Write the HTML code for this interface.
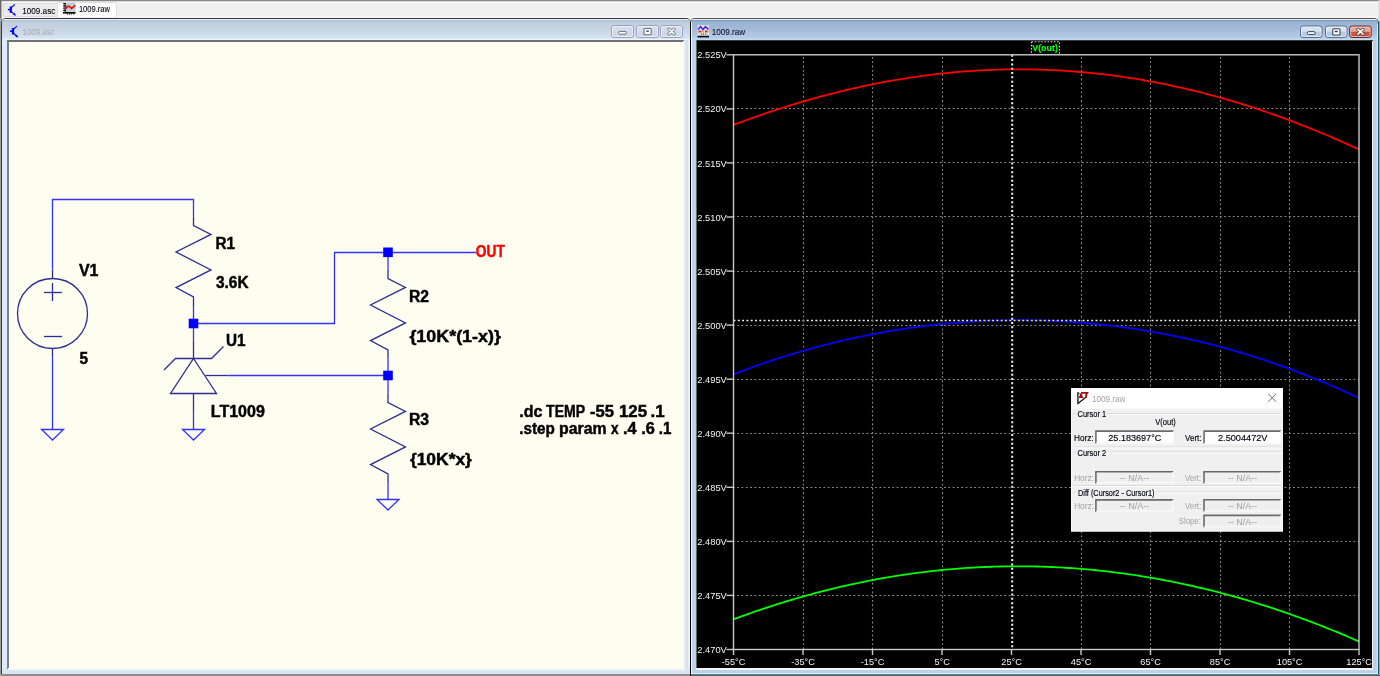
<!DOCTYPE html>
<html><head><meta charset="utf-8"><style>
html,body{margin:0;padding:0;width:1380px;height:676px;overflow:hidden;background:#f0f0f0;}
svg{position:absolute;left:0;top:0;}
</style></head><body>
<svg width="1380" height="676" viewBox="0 0 1380 676">
<defs>
<linearGradient id="tb" x1="0" y1="0" x2="0" y2="1"><stop offset="0" stop-color="#e0f0ff"/><stop offset="0.045" stop-color="#e0f0ff"/><stop offset="0.05" stop-color="#b0c0d0"/><stop offset="0.1" stop-color="#b6c6d6"/><stop offset="0.15" stop-color="#c0cedd"/><stop offset="0.45" stop-color="#c6d4e2"/><stop offset="0.92" stop-color="#d6e4f2"/><stop offset="0.95" stop-color="#e6f4fe"/><stop offset="1" stop-color="#e6f4fe"/></linearGradient>
<linearGradient id="tb2" x1="0" y1="0" x2="0" y2="1"><stop offset="0" stop-color="#e0f0ff"/><stop offset="0.045" stop-color="#e0f0ff"/><stop offset="0.05" stop-color="#7898c0"/><stop offset="0.1" stop-color="#88a6cc"/><stop offset="0.15" stop-color="#9ab4d4"/><stop offset="0.45" stop-color="#a2bad8"/><stop offset="0.92" stop-color="#b6cee8"/><stop offset="0.95" stop-color="#c0daf5"/><stop offset="1" stop-color="#c0daf5"/></linearGradient>
</defs>
<rect x="0" y="0" width="1380" height="676" fill="#f0f0f0"/>
<rect x="0" y="0" width="1380" height="1.5" fill="#858585"/>
<rect x="0" y="1.5" width="1380" height="1.5" fill="#fbfbfb"/>
<rect x="0" y="16.5" width="1380" height="1.5" fill="#f8f8f8"/>
<rect x="1378.5" y="0" width="1.5" height="20" fill="#d8d8d8"/>
<rect x="0" y="0" width="1.5" height="676" fill="#6a6a6a"/>
<!-- tabs -->
<rect x="3.5" y="3.5" width="54" height="13" fill="#ebebeb" stroke="#dcdcdc"/>
<rect x="57.5" y="2.5" width="59" height="15.5" fill="#ffffff" stroke="#e0e0e0"/>
<text x="22.2" y="13.9" font-size="9.6" font-family="Liberation Sans, sans-serif" fill="#000010" text-anchor="start" textLength="33.14" lengthAdjust="spacingAndGlyphs" stroke="#000010" stroke-width="0.1">1009.asc</text>
<text x="78.9" y="12.3" font-size="9.6" font-family="Liberation Sans, sans-serif" fill="#000010" text-anchor="start" textLength="31.05" lengthAdjust="spacingAndGlyphs" stroke="#000010" stroke-width="0.1">1009.raw</text>
<!-- left window -->
<g shape-rendering="crispEdges">
<rect x="0" y="18" width="1" height="658" fill="#a0a0a0"/>
</g>
<path d="M1.5,676 L1.5,23 Q1.5,18.5 6,18.5 L686,18.5 Q690.5,18.5 690.5,23 L690.5,676" fill="#d4e2f0" stroke="#383838" stroke-width="1"/>
<rect x="2" y="19" width="688" height="21" fill="url(#tb)" rx="3"/>
<g shape-rendering="crispEdges">
<rect x="2" y="40" width="5" height="634" fill="#dcebf8"/>
<rect x="684" y="40" width="6" height="634" fill="#d6e3f1"/>
<rect x="688" y="40" width="2" height="634" fill="#e4f0fb"/>
<rect x="2" y="668" width="688" height="6" fill="#d8e6f3"/>
<rect x="7" y="40" width="677" height="629" fill="#fefef0"/>
<rect x="9" y="42" width="674" height="1" fill="#ffffff"/>
<rect x="9" y="42" width="1" height="626" fill="#ffffff"/>
<rect x="7" y="40" width="2" height="629" fill="#7e7e7e"/>
<rect x="7" y="40" width="677" height="2" fill="#707070"/>
<rect x="683" y="41" width="2" height="628" fill="#f4f4f8"/>
<rect x="8" y="668" width="677" height="2" fill="#f8f8fa"/>
<rect x="1" y="674" width="690" height="2" fill="#8c8c8c"/>
</g>
<text x="22.5" y="35.3" font-size="9.6" font-family="Liberation Sans, sans-serif" fill="#a8a8a8" text-anchor="start" textLength="32.09" lengthAdjust="spacingAndGlyphs">1009.asc</text>
<!-- right window -->
<path d="M690.5,676 L690.5,23 Q690.5,18.5 695,18.5 L1374,18.5 Q1378.5,18.5 1378.5,23 L1378.5,676" fill="#b8d0e8" stroke="#5a5048" stroke-width="1"/>
<rect x="691" y="19" width="687" height="21" fill="url(#tb2)" rx="3"/>
<g shape-rendering="crispEdges">
<rect x="690" y="22" width="1" height="654" fill="#000"/>
<rect x="691" y="22" width="1" height="652" fill="#f4faff"/>
<rect x="692" y="40" width="5" height="634" fill="#bcd4ec"/>
<rect x="1372" y="40" width="6" height="634" fill="#b8d0e8"/>
<rect x="1377" y="24" width="1" height="650" fill="#c8f4ff"/>
<rect x="1378" y="22" width="1" height="654" fill="#0a5868"/>
<rect x="1379" y="21" width="1" height="655" fill="#c09890"/>
<rect x="692" y="668" width="685" height="5" fill="#bcd2ea"/>
<rect x="692" y="673" width="686" height="1" fill="#e0e4fc"/>
<rect x="691" y="674" width="688" height="1" fill="#18a0b4"/>
<rect x="691" y="675" width="689" height="1" fill="#7a5040"/>
<rect x="696" y="40" width="677" height="630" fill="#f4f4f4"/>
<rect x="696" y="40" width="677" height="1" fill="#403830"/>
<rect x="696" y="40" width="1" height="628" fill="#6a6a6a"/>
<rect x="697" y="41" width="675" height="627" fill="#000"/>
</g>
<text x="711.7" y="35.4" font-size="9.6" font-family="Liberation Sans, sans-serif" fill="#101028" text-anchor="start" textLength="33.53" lengthAdjust="spacingAndGlyphs" stroke="#101028" stroke-width="0.1">1009.raw</text>
<polyline points="52.5,269.5 52.5,199.5 193.5,199.5 193.5,216.5" fill="none" stroke="#3232ff" stroke-width="1.3" stroke-linejoin="miter"/>
<line x1="52.5" y1="357.5" x2="52.5" y2="429.5" stroke="#3232ff" stroke-width="1.3"/>
<line x1="193.5" y1="304.5" x2="193.5" y2="340.5" stroke="#3232ff" stroke-width="1.3"/>
<polyline points="193.5,323.5 334.5,323.5 334.5,252.5 476,252.5" fill="none" stroke="#3232ff" stroke-width="1.3" stroke-linejoin="miter"/>
<line x1="388" y1="252.5" x2="388" y2="269.5" stroke="#3232ff" stroke-width="1.3"/>
<line x1="388" y1="358" x2="388" y2="393.5" stroke="#3232ff" stroke-width="1.3"/>
<line x1="228.5" y1="375.5" x2="388" y2="375.5" stroke="#3232ff" stroke-width="1.3"/>
<line x1="193.5" y1="411" x2="193.5" y2="429.5" stroke="#3232ff" stroke-width="1.3"/>
<line x1="388" y1="482" x2="388" y2="499.5" stroke="#3232ff" stroke-width="1.3"/>
<rect x="188.7" y="318.7" width="9.6" height="9.6" fill="#0000ff"/>
<rect x="383.2" y="247.5" width="9.6" height="9.6" fill="#0000ff"/>
<rect x="383.2" y="370.7" width="9.6" height="9.6" fill="#0000ff"/>
<polygon points="41.5,429.5 63.5,429.5 52.5,440.0" fill="none" stroke="#3232ff" stroke-width="1.3"/>
<polygon points="182.5,429.5 204.5,429.5 193.5,440.0" fill="none" stroke="#3232ff" stroke-width="1.3"/>
<polygon points="377,499.5 399,499.5 388,510.0" fill="none" stroke="#3232ff" stroke-width="1.3"/>
<line x1="52.5" y1="269.5" x2="52.5" y2="278.5" stroke="#2c2c96" stroke-width="1.3"/>
<line x1="52.5" y1="348.5" x2="52.5" y2="357.5" stroke="#2c2c96" stroke-width="1.3"/>
<circle cx="52.5" cy="313.5" r="35" fill="none" stroke="#2c2c96" stroke-width="1.3"/>
<line x1="44" y1="292.5" x2="62" y2="292.5" stroke="#2c2c96" stroke-width="1.3"/>
<line x1="52.5" y1="283" x2="52.5" y2="301" stroke="#2c2c96" stroke-width="1.3"/>
<line x1="44" y1="336.5" x2="62" y2="336.5" stroke="#2c2c96" stroke-width="1.3"/>
<polyline points="193.5,216.5 193.5,225.5 211.0,234.4 176.0,252.0 211.0,269.9 176.0,287.6 193.5,297.0 193.5,305.0" fill="none" stroke="#2c2c96" stroke-width="1.3" stroke-linejoin="miter"/>
<polyline points="388,269.5 388,278.5 405.5,287.4 370.5,305.0 405.5,322.9 370.5,340.6 388,350.0 388,358.0" fill="none" stroke="#2c2c96" stroke-width="1.3" stroke-linejoin="miter"/>
<polyline points="388,393.5 388,402.5 405.5,411.4 370.5,429.0 405.5,446.9 370.5,464.6 388,474.0 388,482.0" fill="none" stroke="#2c2c96" stroke-width="1.3" stroke-linejoin="miter"/>
<line x1="193.5" y1="340.5" x2="193.5" y2="358.5" stroke="#2c2c96" stroke-width="1.3"/>
<polyline points="164,370 175.5,358.5 211.5,358.5 223.5,346.5" fill="none" stroke="#2c2c96" stroke-width="1.3" stroke-linejoin="miter"/>
<polygon points="193.5,358.5 216.5,393.5 170.5,393.5" fill="none" stroke="#2c2c96" stroke-width="1.3"/>
<line x1="205.5" y1="375.5" x2="228.5" y2="375.5" stroke="#2c2c96" stroke-width="1.3"/>
<line x1="193.5" y1="393.5" x2="193.5" y2="411" stroke="#2c2c96" stroke-width="1.3"/>
<text x="78.9" y="275.6" font-size="16" font-family="Liberation Sans, sans-serif" font-weight="bold" fill="#000" text-anchor="start" textLength="19.51" lengthAdjust="spacingAndGlyphs" stroke="#000" stroke-width="0.45">V1</text>
<text x="79.5" y="364.0" font-size="16" font-family="Liberation Sans, sans-serif" font-weight="bold" fill="#000" text-anchor="start" textLength="8.51" lengthAdjust="spacingAndGlyphs" stroke="#000" stroke-width="0.45">5</text>
<text x="215.4" y="249.0" font-size="16" font-family="Liberation Sans, sans-serif" font-weight="bold" fill="#000" text-anchor="start" textLength="19.56" lengthAdjust="spacingAndGlyphs" stroke="#000" stroke-width="0.45">R1</text>
<text x="216.0" y="288.4" font-size="16" font-family="Liberation Sans, sans-serif" font-weight="bold" fill="#000" text-anchor="start" textLength="32.51" lengthAdjust="spacingAndGlyphs" stroke="#000" stroke-width="0.45">3.6K</text>
<text x="225.9" y="345.8" font-size="16" font-family="Liberation Sans, sans-serif" font-weight="bold" fill="#000" text-anchor="start" textLength="19.53" lengthAdjust="spacingAndGlyphs" stroke="#000" stroke-width="0.45">U1</text>
<text x="210.8" y="416.5" font-size="16" font-family="Liberation Sans, sans-serif" font-weight="bold" fill="#000" text-anchor="start" textLength="54.03" lengthAdjust="spacingAndGlyphs" stroke="#000" stroke-width="0.45">LT1009</text>
<text x="409.0" y="302.1" font-size="16" font-family="Liberation Sans, sans-serif" font-weight="bold" fill="#000" text-anchor="start" textLength="20.08" lengthAdjust="spacingAndGlyphs" stroke="#000" stroke-width="0.45">R2</text>
<text x="409.4" y="342.3" font-size="16" font-family="Liberation Sans, sans-serif" font-weight="bold" fill="#000" text-anchor="start" textLength="91.51" lengthAdjust="spacingAndGlyphs" stroke="#000" stroke-width="0.45">{10K*(1-x)}</text>
<text x="475.8" y="257.3" font-size="16" font-family="Liberation Sans, sans-serif" font-weight="bold" fill="#ff0000" text-anchor="start" textLength="29.01" lengthAdjust="spacingAndGlyphs" stroke="#ff0000" stroke-width="0.45">OUT</text>
<text x="408.9" y="425.2" font-size="16" font-family="Liberation Sans, sans-serif" font-weight="bold" fill="#000" text-anchor="start" textLength="20.15" lengthAdjust="spacingAndGlyphs" stroke="#000" stroke-width="0.45">R3</text>
<text x="409.9" y="465.2" font-size="16" font-family="Liberation Sans, sans-serif" font-weight="bold" fill="#000" text-anchor="start" textLength="62.01" lengthAdjust="spacingAndGlyphs" stroke="#000" stroke-width="0.45">{10K*x}</text>
<text x="519.3" y="416.5" font-size="16" font-family="Liberation Sans, sans-serif" font-weight="bold" fill="#000" text-anchor="start" textLength="23.08" lengthAdjust="spacingAndGlyphs" stroke="#000" stroke-width="0.45">.dc</text>
<text x="546.1" y="416.5" font-size="16" font-family="Liberation Sans, sans-serif" font-weight="bold" fill="#000" text-anchor="start" textLength="39.0" lengthAdjust="spacingAndGlyphs" stroke="#000" stroke-width="0.45">TEMP</text>
<text x="590.1" y="416.5" font-size="16" font-family="Liberation Sans, sans-serif" font-weight="bold" fill="#000" text-anchor="start" textLength="24.0" lengthAdjust="spacingAndGlyphs" stroke="#000" stroke-width="0.45">-55</text>
<text x="619.0" y="416.5" font-size="16" font-family="Liberation Sans, sans-serif" font-weight="bold" fill="#000" text-anchor="start" textLength="28.05" lengthAdjust="spacingAndGlyphs" stroke="#000" stroke-width="0.45">125</text>
<text x="650.6" y="416.5" font-size="16" font-family="Liberation Sans, sans-serif" font-weight="bold" fill="#000" text-anchor="start" textLength="14.12" lengthAdjust="spacingAndGlyphs" stroke="#000" stroke-width="0.45">.1</text>
<text x="519.3" y="434.3" font-size="16" font-family="Liberation Sans, sans-serif" font-weight="bold" fill="#000" text-anchor="start" textLength="35.56" lengthAdjust="spacingAndGlyphs" stroke="#000" stroke-width="0.45">.step</text>
<text x="559.0" y="434.3" font-size="16" font-family="Liberation Sans, sans-serif" font-weight="bold" fill="#000" text-anchor="start" textLength="47.58" lengthAdjust="spacingAndGlyphs" stroke="#000" stroke-width="0.45">param</text>
<text x="610.9" y="434.3" font-size="16" font-family="Liberation Sans, sans-serif" font-weight="bold" fill="#000" text-anchor="start" textLength="7.57" lengthAdjust="spacingAndGlyphs" stroke="#000" stroke-width="0.45">x</text>
<text x="622.9" y="434.3" font-size="16" font-family="Liberation Sans, sans-serif" font-weight="bold" fill="#000" text-anchor="start" textLength="13.58" lengthAdjust="spacingAndGlyphs" stroke="#000" stroke-width="0.45">.4</text>
<text x="641.2" y="434.3" font-size="16" font-family="Liberation Sans, sans-serif" font-weight="bold" fill="#000" text-anchor="start" textLength="13.58" lengthAdjust="spacingAndGlyphs" stroke="#000" stroke-width="0.45">.6</text>
<text x="658.8" y="434.3" font-size="16" font-family="Liberation Sans, sans-serif" font-weight="bold" fill="#000" text-anchor="start" textLength="12.6" lengthAdjust="spacingAndGlyphs" stroke="#000" stroke-width="0.45">.1</text>
<line x1="803.5" y1="54.8" x2="803.5" y2="649.5" stroke="#8c8c8c" stroke-width="1.1" stroke-dasharray="1.8,2.51" stroke-dashoffset="2.11"/>
<line x1="872.5" y1="54.8" x2="872.5" y2="649.5" stroke="#8c8c8c" stroke-width="1.1" stroke-dasharray="1.8,2.51" stroke-dashoffset="2.11"/>
<line x1="942.5" y1="54.8" x2="942.5" y2="649.5" stroke="#8c8c8c" stroke-width="1.1" stroke-dasharray="1.8,2.51" stroke-dashoffset="2.11"/>
<line x1="1081.5" y1="54.8" x2="1081.5" y2="649.5" stroke="#8c8c8c" stroke-width="1.1" stroke-dasharray="1.8,2.51" stroke-dashoffset="2.11"/>
<line x1="1150.5" y1="54.8" x2="1150.5" y2="649.5" stroke="#8c8c8c" stroke-width="1.1" stroke-dasharray="1.8,2.51" stroke-dashoffset="2.11"/>
<line x1="1220.5" y1="54.8" x2="1220.5" y2="649.5" stroke="#8c8c8c" stroke-width="1.1" stroke-dasharray="1.8,2.51" stroke-dashoffset="2.11"/>
<line x1="1289.5" y1="54.8" x2="1289.5" y2="649.5" stroke="#8c8c8c" stroke-width="1.1" stroke-dasharray="1.8,2.51" stroke-dashoffset="2.11"/>
<line x1="733.5" y1="108.5" x2="1359" y2="108.5" stroke="#8c8c8c" stroke-width="1.1" stroke-dasharray="1.8,2.51" stroke-dashoffset="0.64"/>
<line x1="733.5" y1="162.5" x2="1359" y2="162.5" stroke="#8c8c8c" stroke-width="1.1" stroke-dasharray="1.8,2.51" stroke-dashoffset="0.64"/>
<line x1="733.5" y1="216.5" x2="1359" y2="216.5" stroke="#8c8c8c" stroke-width="1.1" stroke-dasharray="1.8,2.51" stroke-dashoffset="0.64"/>
<line x1="733.5" y1="271.5" x2="1359" y2="271.5" stroke="#8c8c8c" stroke-width="1.1" stroke-dasharray="1.8,2.51" stroke-dashoffset="0.64"/>
<line x1="733.5" y1="325.5" x2="1359" y2="325.5" stroke="#8c8c8c" stroke-width="1.1" stroke-dasharray="1.8,2.51" stroke-dashoffset="0.64"/>
<line x1="733.5" y1="379.5" x2="1359" y2="379.5" stroke="#8c8c8c" stroke-width="1.1" stroke-dasharray="1.8,2.51" stroke-dashoffset="0.64"/>
<line x1="733.5" y1="433.5" x2="1359" y2="433.5" stroke="#8c8c8c" stroke-width="1.1" stroke-dasharray="1.8,2.51" stroke-dashoffset="0.64"/>
<line x1="733.5" y1="487.5" x2="1359" y2="487.5" stroke="#8c8c8c" stroke-width="1.1" stroke-dasharray="1.8,2.51" stroke-dashoffset="0.64"/>
<line x1="733.5" y1="541.5" x2="1359" y2="541.5" stroke="#8c8c8c" stroke-width="1.1" stroke-dasharray="1.8,2.51" stroke-dashoffset="0.64"/>
<line x1="733.5" y1="595.5" x2="1359" y2="595.5" stroke="#8c8c8c" stroke-width="1.1" stroke-dasharray="1.8,2.51" stroke-dashoffset="0.64"/>
<path d="M733.0,125.10 L736.0,123.96 L739.0,122.84 L742.0,121.73 L745.0,120.63 L748.0,119.53 L751.0,118.45 L754.0,117.38 L757.0,116.33 L760.0,115.28 L763.0,114.24 L766.0,113.22 L769.0,112.21 L772.0,111.20 L775.0,110.21 L778.0,109.23 L781.0,108.26 L784.0,107.31 L787.0,106.36 L790.0,105.43 L793.0,104.50 L796.0,103.59 L799.0,102.69 L802.0,101.80 L805.0,100.93 L808.0,100.06 L811.0,99.21 L814.0,98.36 L817.0,97.53 L820.0,96.71 L823.0,95.91 L826.0,95.11 L829.0,94.33 L832.0,93.55 L835.0,92.79 L838.0,92.04 L841.0,91.31 L844.0,90.58 L847.0,89.87 L850.0,89.17 L853.0,88.48 L856.0,87.80 L859.0,87.13 L862.0,86.48 L865.0,85.84 L868.0,85.21 L871.0,84.59 L874.0,83.98 L877.0,83.39 L880.0,82.81 L883.0,82.24 L886.0,81.68 L889.0,81.13 L892.0,80.60 L895.0,80.08 L898.0,79.57 L901.0,79.07 L904.0,78.59 L907.0,78.11 L910.0,77.65 L913.0,77.20 L916.0,76.77 L919.0,76.35 L922.0,75.93 L925.0,75.53 L928.0,75.15 L931.0,74.77 L934.0,74.41 L937.0,74.06 L940.0,73.72 L943.0,73.40 L946.0,73.09 L949.0,72.79 L952.0,72.50 L955.0,72.22 L958.0,71.96 L961.0,71.71 L964.0,71.47 L967.0,71.25 L970.0,71.03 L973.0,70.83 L976.0,70.65 L979.0,70.47 L982.0,70.31 L985.0,70.16 L988.0,70.02 L991.0,69.89 L994.0,69.78 L997.0,69.68 L1000.0,69.59 L1003.0,69.52 L1006.0,69.46 L1009.0,69.41 L1012.0,69.37 L1015.0,69.34 L1018.0,69.33 L1021.0,69.33 L1024.0,69.35 L1027.0,69.37 L1030.0,69.41 L1033.0,69.46 L1036.0,69.53 L1039.0,69.60 L1042.0,69.69 L1045.0,69.79 L1048.0,69.91 L1051.0,70.03 L1054.0,70.17 L1057.0,70.33 L1060.0,70.49 L1063.0,70.67 L1066.0,70.86 L1069.0,71.06 L1072.0,71.28 L1075.0,71.51 L1078.0,71.75 L1081.0,72.00 L1084.0,72.27 L1087.0,72.54 L1090.0,72.84 L1093.0,73.14 L1096.0,73.46 L1099.0,73.79 L1102.0,74.13 L1105.0,74.48 L1108.0,74.85 L1111.0,75.23 L1114.0,75.62 L1117.0,76.03 L1120.0,76.45 L1123.0,76.88 L1126.0,77.32 L1129.0,77.78 L1132.0,78.25 L1135.0,78.73 L1138.0,79.22 L1141.0,79.73 L1144.0,80.25 L1147.0,80.78 L1150.0,81.32 L1153.0,81.88 L1156.0,82.45 L1159.0,83.03 L1162.0,83.62 L1165.0,84.23 L1168.0,84.85 L1171.0,85.48 L1174.0,86.12 L1177.0,86.78 L1180.0,87.45 L1183.0,88.13 L1186.0,88.83 L1189.0,89.53 L1192.0,90.25 L1195.0,90.98 L1198.0,91.73 L1201.0,92.48 L1204.0,93.25 L1207.0,94.03 L1210.0,94.83 L1213.0,95.63 L1216.0,96.45 L1219.0,97.28 L1222.0,98.12 L1225.0,98.98 L1228.0,99.85 L1231.0,100.73 L1234.0,101.62 L1237.0,102.52 L1240.0,103.44 L1243.0,104.37 L1246.0,105.31 L1249.0,106.26 L1252.0,107.23 L1255.0,108.20 L1258.0,109.19 L1261.0,110.19 L1264.0,111.21 L1267.0,112.23 L1270.0,113.27 L1273.0,114.32 L1276.0,115.38 L1279.0,116.46 L1282.0,117.54 L1285.0,118.64 L1288.0,119.75 L1291.0,120.87 L1294.0,122.01 L1297.0,123.15 L1300.0,124.31 L1303.0,125.48 L1306.0,126.66 L1309.0,127.85 L1312.0,129.06 L1315.0,130.27 L1318.0,131.50 L1321.0,132.74 L1324.0,133.99 L1327.0,135.25 L1330.0,136.53 L1333.0,137.81 L1336.0,139.11 L1339.0,140.42 L1342.0,141.74 L1345.0,143.07 L1348.0,144.42 L1351.0,145.77 L1354.0,147.14 L1359.0,149.44" fill="none" stroke="#ff0000" stroke-width="1.8"/>
<path d="M733.0,374.46 L736.0,373.31 L739.0,372.16 L742.0,371.03 L745.0,369.91 L748.0,368.81 L751.0,367.71 L754.0,366.64 L757.0,365.57 L760.0,364.52 L763.0,363.48 L766.0,362.45 L769.0,361.44 L772.0,360.44 L775.0,359.45 L778.0,358.47 L781.0,357.51 L784.0,356.56 L787.0,355.62 L790.0,354.70 L793.0,353.79 L796.0,352.89 L799.0,352.00 L802.0,351.13 L805.0,350.27 L808.0,349.42 L811.0,348.59 L814.0,347.77 L817.0,346.95 L820.0,346.16 L823.0,345.37 L826.0,344.60 L829.0,343.84 L832.0,343.09 L835.0,342.35 L838.0,341.63 L841.0,340.92 L844.0,340.22 L847.0,339.53 L850.0,338.86 L853.0,338.20 L856.0,337.55 L859.0,336.91 L862.0,336.29 L865.0,335.67 L868.0,335.07 L871.0,334.48 L874.0,333.91 L877.0,333.34 L880.0,332.79 L883.0,332.25 L886.0,331.72 L889.0,331.20 L892.0,330.70 L895.0,330.21 L898.0,329.73 L901.0,329.26 L904.0,328.80 L907.0,328.36 L910.0,327.92 L913.0,327.50 L916.0,327.09 L919.0,326.70 L922.0,326.31 L925.0,325.94 L928.0,325.58 L931.0,325.23 L934.0,324.89 L937.0,324.56 L940.0,324.25 L943.0,323.95 L946.0,323.65 L949.0,323.38 L952.0,323.11 L955.0,322.85 L958.0,322.61 L961.0,322.38 L964.0,322.16 L967.0,321.95 L970.0,321.75 L973.0,321.57 L976.0,321.39 L979.0,321.23 L982.0,321.08 L985.0,320.94 L988.0,320.82 L991.0,320.70 L994.0,320.60 L997.0,320.51 L1000.0,320.43 L1003.0,320.36 L1006.0,320.31 L1009.0,320.26 L1012.0,320.23 L1015.0,320.21 L1018.0,320.20 L1021.0,320.20 L1024.0,320.21 L1027.0,320.24 L1030.0,320.28 L1033.0,320.33 L1036.0,320.39 L1039.0,320.46 L1042.0,320.54 L1045.0,320.64 L1048.0,320.75 L1051.0,320.87 L1054.0,321.00 L1057.0,321.14 L1060.0,321.29 L1063.0,321.46 L1066.0,321.64 L1069.0,321.83 L1072.0,322.03 L1075.0,322.24 L1078.0,322.47 L1081.0,322.70 L1084.0,322.95 L1087.0,323.21 L1090.0,323.48 L1093.0,323.77 L1096.0,324.06 L1099.0,324.37 L1102.0,324.69 L1105.0,325.02 L1108.0,325.36 L1111.0,325.72 L1114.0,326.09 L1117.0,326.46 L1120.0,326.85 L1123.0,327.26 L1126.0,327.67 L1129.0,328.10 L1132.0,328.54 L1135.0,328.99 L1138.0,329.45 L1141.0,329.92 L1144.0,330.41 L1147.0,330.91 L1150.0,331.42 L1153.0,331.94 L1156.0,332.48 L1159.0,333.02 L1162.0,333.58 L1165.0,334.15 L1168.0,334.74 L1171.0,335.33 L1174.0,335.94 L1177.0,336.56 L1180.0,337.19 L1183.0,337.84 L1186.0,338.49 L1189.0,339.16 L1192.0,339.84 L1195.0,340.54 L1198.0,341.24 L1201.0,341.96 L1204.0,342.69 L1207.0,343.44 L1210.0,344.19 L1213.0,344.96 L1216.0,345.74 L1219.0,346.53 L1222.0,347.34 L1225.0,348.16 L1228.0,348.99 L1231.0,349.83 L1234.0,350.69 L1237.0,351.56 L1240.0,352.44 L1243.0,353.34 L1246.0,354.24 L1249.0,355.17 L1252.0,356.10 L1255.0,357.04 L1258.0,358.00 L1261.0,358.98 L1264.0,359.96 L1267.0,360.96 L1270.0,361.97 L1273.0,362.99 L1276.0,364.03 L1279.0,365.08 L1282.0,366.14 L1285.0,367.22 L1288.0,368.31 L1291.0,369.41 L1294.0,370.53 L1297.0,371.66 L1300.0,372.80 L1303.0,373.96 L1306.0,375.13 L1309.0,376.32 L1312.0,377.51 L1315.0,378.72 L1318.0,379.95 L1321.0,381.19 L1324.0,382.44 L1327.0,383.70 L1330.0,384.98 L1333.0,386.27 L1336.0,387.58 L1339.0,388.90 L1342.0,390.24 L1345.0,391.58 L1348.0,392.95 L1351.0,394.32 L1354.0,395.71 L1359.0,398.06" fill="none" stroke="#0000ff" stroke-width="1.8"/>
<path d="M733.0,619.53 L736.0,618.41 L739.0,617.30 L742.0,616.20 L745.0,615.11 L748.0,614.04 L751.0,612.98 L754.0,611.93 L757.0,610.89 L760.0,609.86 L763.0,608.85 L766.0,607.85 L769.0,606.86 L772.0,605.88 L775.0,604.92 L778.0,603.96 L781.0,603.02 L784.0,602.09 L787.0,601.18 L790.0,600.27 L793.0,599.38 L796.0,598.50 L799.0,597.63 L802.0,596.77 L805.0,595.93 L808.0,595.09 L811.0,594.27 L814.0,593.46 L817.0,592.67 L820.0,591.88 L823.0,591.11 L826.0,590.35 L829.0,589.60 L832.0,588.86 L835.0,588.13 L838.0,587.42 L841.0,586.72 L844.0,586.03 L847.0,585.35 L850.0,584.69 L853.0,584.03 L856.0,583.39 L859.0,582.76 L862.0,582.14 L865.0,581.54 L868.0,580.94 L871.0,580.36 L874.0,579.79 L877.0,579.23 L880.0,578.68 L883.0,578.15 L886.0,577.62 L889.0,577.11 L892.0,576.61 L895.0,576.13 L898.0,575.65 L901.0,575.19 L904.0,574.73 L907.0,574.29 L910.0,573.87 L913.0,573.45 L916.0,573.04 L919.0,572.65 L922.0,572.27 L925.0,571.90 L928.0,571.54 L931.0,571.20 L934.0,570.86 L937.0,570.54 L940.0,570.23 L943.0,569.93 L946.0,569.65 L949.0,569.37 L952.0,569.11 L955.0,568.86 L958.0,568.62 L961.0,568.39 L964.0,568.17 L967.0,567.97 L970.0,567.77 L973.0,567.59 L976.0,567.42 L979.0,567.27 L982.0,567.12 L985.0,566.99 L988.0,566.86 L991.0,566.75 L994.0,566.66 L997.0,566.57 L1000.0,566.49 L1003.0,566.43 L1006.0,566.38 L1009.0,566.34 L1012.0,566.31 L1015.0,566.29 L1018.0,566.29 L1021.0,566.29 L1024.0,566.31 L1027.0,566.34 L1030.0,566.38 L1033.0,566.44 L1036.0,566.50 L1039.0,566.58 L1042.0,566.67 L1045.0,566.77 L1048.0,566.88 L1051.0,567.00 L1054.0,567.13 L1057.0,567.28 L1060.0,567.44 L1063.0,567.61 L1066.0,567.79 L1069.0,567.98 L1072.0,568.19 L1075.0,568.41 L1078.0,568.63 L1081.0,568.87 L1084.0,569.13 L1087.0,569.39 L1090.0,569.66 L1093.0,569.95 L1096.0,570.25 L1099.0,570.56 L1102.0,570.88 L1105.0,571.21 L1108.0,571.56 L1111.0,571.91 L1114.0,572.28 L1117.0,572.66 L1120.0,573.05 L1123.0,573.45 L1126.0,573.87 L1129.0,574.29 L1132.0,574.73 L1135.0,575.18 L1138.0,575.64 L1141.0,576.11 L1144.0,576.60 L1147.0,577.09 L1150.0,577.60 L1153.0,578.12 L1156.0,578.65 L1159.0,579.19 L1162.0,579.75 L1165.0,580.31 L1168.0,580.89 L1171.0,581.48 L1174.0,582.08 L1177.0,582.69 L1180.0,583.31 L1183.0,583.95 L1186.0,584.59 L1189.0,585.25 L1192.0,585.92 L1195.0,586.60 L1198.0,587.30 L1201.0,588.00 L1204.0,588.72 L1207.0,589.44 L1210.0,590.18 L1213.0,590.93 L1216.0,591.70 L1219.0,592.47 L1222.0,593.26 L1225.0,594.05 L1228.0,594.86 L1231.0,595.68 L1234.0,596.51 L1237.0,597.36 L1240.0,598.21 L1243.0,599.08 L1246.0,599.96 L1249.0,600.85 L1252.0,601.75 L1255.0,602.66 L1258.0,603.59 L1261.0,604.52 L1264.0,605.47 L1267.0,606.43 L1270.0,607.40 L1273.0,608.38 L1276.0,609.38 L1279.0,610.38 L1282.0,611.40 L1285.0,612.43 L1288.0,613.47 L1291.0,614.52 L1294.0,615.59 L1297.0,616.66 L1300.0,617.75 L1303.0,618.85 L1306.0,619.96 L1309.0,621.08 L1312.0,622.21 L1315.0,623.36 L1318.0,624.52 L1321.0,625.68 L1324.0,626.86 L1327.0,628.05 L1330.0,629.26 L1333.0,630.47 L1336.0,631.70 L1339.0,632.94 L1342.0,634.19 L1345.0,635.45 L1348.0,636.72 L1351.0,638.00 L1354.0,639.30 L1359.0,641.48" fill="none" stroke="#00ff00" stroke-width="1.8"/>
<g style="mix-blend-mode:difference"><line x1="733.5" y1="320.5" x2="1359" y2="320.5" stroke="#f4f4f4" stroke-width="1.6" stroke-dasharray="1.9,2.41"/></g>
<line x1="1012.2" y1="54.8" x2="1012.2" y2="649.5" stroke="#f4f4f4" stroke-width="2" stroke-dasharray="2,2.31"/>
<rect x="733.5" y="54.8" width="625.5" height="594.7" fill="none" stroke="#c8c8c8" stroke-width="1.4"/>
<line x1="726.5" y1="54.8" x2="733.5" y2="54.8" stroke="#c8c8c8" stroke-width="1.4"/>
<text x="697.3" y="58.4" font-size="9.6" font-family="Liberation Sans, sans-serif" fill="#f4f4f4" text-anchor="start" textLength="29.5" lengthAdjust="spacingAndGlyphs">2.525V</text>
<line x1="726.5" y1="108.9" x2="733.5" y2="108.9" stroke="#c8c8c8" stroke-width="1.4"/>
<text x="697.3" y="112.46363636363637" font-size="9.6" font-family="Liberation Sans, sans-serif" fill="#f4f4f4" text-anchor="start" textLength="29.5" lengthAdjust="spacingAndGlyphs">2.520V</text>
<line x1="726.5" y1="162.9" x2="733.5" y2="162.9" stroke="#c8c8c8" stroke-width="1.4"/>
<text x="697.3" y="166.52727272727273" font-size="9.6" font-family="Liberation Sans, sans-serif" fill="#f4f4f4" text-anchor="start" textLength="29.5" lengthAdjust="spacingAndGlyphs">2.515V</text>
<line x1="726.5" y1="217.0" x2="733.5" y2="217.0" stroke="#c8c8c8" stroke-width="1.4"/>
<text x="697.3" y="220.5909090909091" font-size="9.6" font-family="Liberation Sans, sans-serif" fill="#f4f4f4" text-anchor="start" textLength="29.5" lengthAdjust="spacingAndGlyphs">2.510V</text>
<line x1="726.5" y1="271.1" x2="733.5" y2="271.1" stroke="#c8c8c8" stroke-width="1.4"/>
<text x="697.3" y="274.6545454545455" font-size="9.6" font-family="Liberation Sans, sans-serif" fill="#f4f4f4" text-anchor="start" textLength="29.5" lengthAdjust="spacingAndGlyphs">2.505V</text>
<line x1="726.5" y1="325.1" x2="733.5" y2="325.1" stroke="#c8c8c8" stroke-width="1.4"/>
<text x="697.3" y="328.71818181818185" font-size="9.6" font-family="Liberation Sans, sans-serif" fill="#f4f4f4" text-anchor="start" textLength="29.5" lengthAdjust="spacingAndGlyphs">2.500V</text>
<line x1="726.5" y1="379.2" x2="733.5" y2="379.2" stroke="#c8c8c8" stroke-width="1.4"/>
<text x="697.3" y="382.78181818181827" font-size="9.6" font-family="Liberation Sans, sans-serif" fill="#f4f4f4" text-anchor="start" textLength="29.5" lengthAdjust="spacingAndGlyphs">2.495V</text>
<line x1="726.5" y1="433.2" x2="733.5" y2="433.2" stroke="#c8c8c8" stroke-width="1.4"/>
<text x="697.3" y="436.84545454545463" font-size="9.6" font-family="Liberation Sans, sans-serif" fill="#f4f4f4" text-anchor="start" textLength="29.5" lengthAdjust="spacingAndGlyphs">2.490V</text>
<line x1="726.5" y1="487.3" x2="733.5" y2="487.3" stroke="#c8c8c8" stroke-width="1.4"/>
<text x="697.3" y="490.909090909091" font-size="9.6" font-family="Liberation Sans, sans-serif" fill="#f4f4f4" text-anchor="start" textLength="29.5" lengthAdjust="spacingAndGlyphs">2.485V</text>
<line x1="726.5" y1="541.4" x2="733.5" y2="541.4" stroke="#c8c8c8" stroke-width="1.4"/>
<text x="697.3" y="544.9727272727273" font-size="9.6" font-family="Liberation Sans, sans-serif" fill="#f4f4f4" text-anchor="start" textLength="29.5" lengthAdjust="spacingAndGlyphs">2.480V</text>
<line x1="726.5" y1="595.4" x2="733.5" y2="595.4" stroke="#c8c8c8" stroke-width="1.4"/>
<text x="697.3" y="599.0363636363636" font-size="9.6" font-family="Liberation Sans, sans-serif" fill="#f4f4f4" text-anchor="start" textLength="29.5" lengthAdjust="spacingAndGlyphs">2.475V</text>
<line x1="726.5" y1="649.5" x2="733.5" y2="649.5" stroke="#c8c8c8" stroke-width="1.4"/>
<text x="697.3" y="653.1" font-size="9.6" font-family="Liberation Sans, sans-serif" fill="#f4f4f4" text-anchor="start" textLength="29.5" lengthAdjust="spacingAndGlyphs">2.470V</text>
<line x1="733.5" y1="649.5" x2="733.5" y2="655" stroke="#c8c8c8" stroke-width="1.4"/>
<text x="733.6" y="665" font-size="9.2" font-family="Liberation Sans, sans-serif" fill="#f4f4f4" text-anchor="middle">-55°C</text>
<line x1="803.0" y1="649.5" x2="803.0" y2="655" stroke="#c8c8c8" stroke-width="1.4"/>
<text x="803.1" y="665" font-size="9.2" font-family="Liberation Sans, sans-serif" fill="#f4f4f4" text-anchor="middle">-35°C</text>
<line x1="872.5" y1="649.5" x2="872.5" y2="655" stroke="#c8c8c8" stroke-width="1.4"/>
<text x="872.6" y="665" font-size="9.2" font-family="Liberation Sans, sans-serif" fill="#f4f4f4" text-anchor="middle">-15°C</text>
<line x1="942.0" y1="649.5" x2="942.0" y2="655" stroke="#c8c8c8" stroke-width="1.4"/>
<text x="942.1" y="665" font-size="9.2" font-family="Liberation Sans, sans-serif" fill="#f4f4f4" text-anchor="middle">5°C</text>
<line x1="1011.5" y1="649.5" x2="1011.5" y2="655" stroke="#c8c8c8" stroke-width="1.4"/>
<text x="1011.6" y="665" font-size="9.2" font-family="Liberation Sans, sans-serif" fill="#f4f4f4" text-anchor="middle">25°C</text>
<line x1="1081.0" y1="649.5" x2="1081.0" y2="655" stroke="#c8c8c8" stroke-width="1.4"/>
<text x="1081.1" y="665" font-size="9.2" font-family="Liberation Sans, sans-serif" fill="#f4f4f4" text-anchor="middle">45°C</text>
<line x1="1150.5" y1="649.5" x2="1150.5" y2="655" stroke="#c8c8c8" stroke-width="1.4"/>
<text x="1150.6" y="665" font-size="9.2" font-family="Liberation Sans, sans-serif" fill="#f4f4f4" text-anchor="middle">65°C</text>
<line x1="1220.0" y1="649.5" x2="1220.0" y2="655" stroke="#c8c8c8" stroke-width="1.4"/>
<text x="1220.1" y="665" font-size="9.2" font-family="Liberation Sans, sans-serif" fill="#f4f4f4" text-anchor="middle">85°C</text>
<line x1="1289.5" y1="649.5" x2="1289.5" y2="655" stroke="#c8c8c8" stroke-width="1.4"/>
<text x="1289.6" y="665" font-size="9.2" font-family="Liberation Sans, sans-serif" fill="#f4f4f4" text-anchor="middle">105°C</text>
<line x1="1359.0" y1="649.5" x2="1359.0" y2="655" stroke="#c8c8c8" stroke-width="1.4"/>
<text x="1359.1" y="665" font-size="9.2" font-family="Liberation Sans, sans-serif" fill="#f4f4f4" text-anchor="middle">125°C</text>
<text x="1032.2" y="50.9" font-size="9.8" font-family="Liberation Sans, sans-serif" font-weight="bold" fill="#00ff00" text-anchor="start" textLength="25.8" lengthAdjust="spacingAndGlyphs" stroke="#00ff00" stroke-width="0.2">V(out)</text>
<rect x="1031.5" y="41.8" width="28" height="12.7" fill="none" stroke="#d8d8d8" stroke-width="1" stroke-dasharray="1.6,1.6"/>
<rect x="611.5" y="25.5" width="22" height="12" rx="2.5" fill="#cdd9e6" stroke="#9aa0c6" stroke-width="1"/><rect x="612.5" y="26.5" width="20" height="5.0" fill="#d4deea"/><rect x="612.5" y="26.5" width="20" height="10" rx="1.5" fill="none" stroke="#ffffff" stroke-opacity="0.55" stroke-width="1"/><rect x="618.6" y="31.4" width="7.8" height="2.8" rx="1.2" fill="#fff" stroke="#6a7082" stroke-width="1"/>
<rect x="636.5" y="25.5" width="22" height="12" rx="2.5" fill="#cdd9e6" stroke="#9aa0c6" stroke-width="1"/><rect x="637.5" y="26.5" width="20" height="5.0" fill="#d4deea"/><rect x="637.5" y="26.5" width="20" height="10" rx="1.5" fill="none" stroke="#ffffff" stroke-opacity="0.55" stroke-width="1"/><rect x="644.0" y="28.5" width="7.2" height="6.2" rx="1" fill="#fff" stroke="#6a7082" stroke-width="1.1"/><rect x="646.0" y="30.4" width="3" height="1.6" fill="#6a7082"/>
<rect x="660.5" y="25.5" width="22" height="12" rx="2.5" fill="#cdd9e6" stroke="#9aa0c6" stroke-width="1"/><rect x="661.5" y="26.5" width="20" height="5.0" fill="#d4deea"/><rect x="661.5" y="26.5" width="20" height="10" rx="1.5" fill="none" stroke="#ffffff" stroke-opacity="0.55" stroke-width="1"/><path d="M668.9,29.1 L674.1,33.9 M674.1,29.1 L668.9,33.9" stroke="#6a7082" stroke-width="3.2" stroke-linecap="round"/><path d="M668.9,29.1 L674.1,33.9 M674.1,29.1 L668.9,33.9" stroke="#fff" stroke-width="1.6" stroke-linecap="round"/>
<rect x="1300.5" y="26.0" width="21.5" height="11.5" rx="2.5" fill="#b3cbe4" stroke="#5a6b86" stroke-width="1"/><rect x="1301.5" y="27.0" width="19.5" height="4.75" fill="#d3e2f2"/><rect x="1301.5" y="27.0" width="19.5" height="9.5" rx="1.5" fill="none" stroke="#ffffff" stroke-opacity="0.55" stroke-width="1"/><rect x="1307.35" y="31.65" width="7.8" height="2.8" rx="1.2" fill="#fff" stroke="#3c4050" stroke-width="1"/>
<rect x="1325.5" y="26.0" width="21.5" height="11.5" rx="2.5" fill="#b3cbe4" stroke="#5a6b86" stroke-width="1"/><rect x="1326.5" y="27.0" width="19.5" height="4.75" fill="#d3e2f2"/><rect x="1326.5" y="27.0" width="19.5" height="9.5" rx="1.5" fill="none" stroke="#ffffff" stroke-opacity="0.55" stroke-width="1"/><rect x="1332.75" y="28.75" width="7.2" height="6.2" rx="1" fill="#fff" stroke="#3c4050" stroke-width="1.1"/><rect x="1334.75" y="30.65" width="3" height="1.6" fill="#3c4050"/>
<rect x="1349.7" y="26.0" width="21.5" height="11.5" rx="2.5" fill="#c9553e" stroke="#6a2828" stroke-width="1"/><rect x="1350.7" y="27.0" width="19.5" height="4.75" fill="#e8a596"/><rect x="1350.7" y="27.0" width="19.5" height="9.5" rx="1.5" fill="none" stroke="#ffffff" stroke-opacity="0.55" stroke-width="1"/><path d="M1357.8500000000001,29.35 L1363.05,34.15 M1363.05,29.35 L1357.8500000000001,34.15" stroke="#3c4050" stroke-width="3.2" stroke-linecap="round"/><path d="M1357.8500000000001,29.35 L1363.05,34.15 M1363.05,29.35 L1357.8500000000001,34.15" stroke="#fff" stroke-width="1.6" stroke-linecap="round"/>
<g stroke="#0000ff" fill="none"><path d="M10.8,6.4 L10.8,12.9" stroke-width="2.2"/><path d="M7.800000000000001,9.600000000000001 L10.8,9.600000000000001" stroke-width="1.5"/><path d="M11.600000000000001,7.4 L14.8,4.5" stroke-width="1.1"/><path d="M11.600000000000001,11.9 L15.4,15.4" stroke-width="1.2"/></g><path d="M15.8,15.8 L13.0,14.6 L14.600000000000001,13.0 Z" fill="#0000ff"/>
<g stroke="#0000ff" fill="none"><path d="M13,28 L13,34.5" stroke-width="2.2"/><path d="M10,31.2 L13,31.2" stroke-width="1.5"/><path d="M13.8,29.0 L17,26.1" stroke-width="1.1"/><path d="M13.8,33.5 L17.6,37" stroke-width="1.2"/></g><path d="M18,37.4 L15.2,36.2 L16.8,34.6 Z" fill="#0000ff"/>
<rect x="66" y="3" width="9.5" height="8.6" fill="#c4c4c4"/><path d="M66,5.6 L75.5,5.6 M66,9.2 L75.5,9.2 M69,3 L69,11.6 M72.4,3 L72.4,11.6" stroke="#a8e4f4" stroke-width="0.9"/><path d="M63.2,3.6 L65.6,3.6 M63.2,5.9 L65.6,5.9 M63.2,8.1 L65.6,8.1 M63.2,10.3 L65.6,10.3" stroke="#000" stroke-width="1.3"/><path d="M65.2,3 L65.2,12" stroke="#000" stroke-width="0.9"/><rect x="63" y="12" width="12.6" height="1.6" fill="#000"/><path d="M67.6,13.4 L67.6,14.6 M69.6,13.4 L69.6,14.6 M71.6,13.4 L71.6,14.6 M73.6,13.4 L73.6,14.6" stroke="#000" stroke-width="1.1"/><path d="M65.3,8.8 L67.6,6.3 L69.3,6.3 L71.6,8.4 L73.4,7 L75,5.3" stroke="#ff0000" stroke-width="1.7" fill="none" stroke-linejoin="round"/>
<rect x="697.5" y="25" width="11.5" height="11" fill="#e0ddd5"/><path d="M698,29.5 L700.5,26.6 L703,29.5 L705.5,26.6 L708.5,29.5" stroke="#3030e0" stroke-width="1.5" fill="none"/><rect x="698.5" y="30.6" width="2.8" height="1.8" fill="#ff2020"/><rect x="705" y="30.6" width="2.8" height="1.8" fill="#ff2020"/><rect x="702" y="31" width="2" height="1.4" fill="#e09080"/><path d="M701.5,33.3 L701.5,35 M703.5,33.3 L703.5,35 M705.5,33.3 L705.5,35" stroke="#5050b0" stroke-width="0.8"/><rect x="697.5" y="35.8" width="11.5" height="1.6" fill="#000"/>
<rect x="1071" y="388" width="212" height="143.5" fill="#f0f0f0"/>
<rect x="1071" y="388" width="212" height="20.7" fill="#ffffff"/>
<rect x="1071.5" y="388.5" width="211" height="142.5" fill="none" stroke="#fafafa" stroke-width="1"/>
<path d="M1077.9,392.2 L1077.9,403.4 L1086,397.3" fill="none" stroke="#101010" stroke-width="1.3"/><path d="M1078,392.6 L1079.6,393.6" stroke="#101010" stroke-width="1"/><path d="M1078.8,397.9 L1083.9,397.9 L1082.6,396.4 L1081.6,393 L1080.4,393.2 Z" fill="#a00808"/><path d="M1080.8,392.1 L1088.9,392.1 L1087.7,393.8 L1081.6,393.8 Z M1085.6,393.5 L1087.7,393.5 L1086.6,397.9 L1084.9,397.9 Z" fill="#a00808"/>
<text x="1091.9" y="401.5" font-size="9.2" font-family="Liberation Sans, sans-serif" fill="#a0a0a0" text-anchor="start" textLength="33.53" lengthAdjust="spacingAndGlyphs">1009.raw</text>
<path d="M1268.3,393.8 L1276.2,401.8 M1276.2,393.8 L1268.3,401.8" stroke="#6e6e6e" stroke-width="1"/>
<path d="M1073,413.5 L1075.5,413.5 M1107,413.5 L1281,413.5 M1073,447 L1281,447 M1073,452 L1076,452 M1108,452 L1281,452 M1073,485.5 L1281,485.5 M1073,492 L1076,492 M1156,492 L1281,492" stroke="#d9d9d9" stroke-width="1"/>
<path d="M1107,414.5 L1281,414.5 M1073,448 L1281,448 M1108,453 L1281,453 M1073,486.5 L1281,486.5 M1156,493 L1281,493" stroke="#ffffff" stroke-width="1"/>
<text x="1077.6" y="417.3" font-size="9.2" font-family="Liberation Sans, sans-serif" fill="#000010" text-anchor="start" textLength="28.52" lengthAdjust="spacingAndGlyphs" stroke="#000010" stroke-width="0.15">Cursor 1</text>
<text x="1077.6" y="456.2" font-size="9.2" font-family="Liberation Sans, sans-serif" fill="#000010" text-anchor="start" textLength="28.52" lengthAdjust="spacingAndGlyphs" stroke="#000010" stroke-width="0.15">Cursor 2</text>
<text x="1078.0" y="495.8" font-size="9.2" font-family="Liberation Sans, sans-serif" fill="#000010" text-anchor="start" textLength="76.5" lengthAdjust="spacingAndGlyphs" stroke="#000010" stroke-width="0.15">Diff (Cursor2 - Cursor1)</text>
<text x="1155.3" y="425.2" font-size="9.2" font-family="Liberation Sans, sans-serif" fill="#000010" text-anchor="start" textLength="20.52" lengthAdjust="spacingAndGlyphs" stroke="#000010" stroke-width="0.15">V(out)</text>
<text x="1074.0" y="440.5" font-size="9.2" font-family="Liberation Sans, sans-serif" fill="#000010" text-anchor="start" textLength="19.63" lengthAdjust="spacingAndGlyphs" stroke="#000010" stroke-width="0.15">Horz:</text>
<text x="1185.0" y="440.5" font-size="9.2" font-family="Liberation Sans, sans-serif" fill="#000010" text-anchor="start" textLength="16.56" lengthAdjust="spacingAndGlyphs" stroke="#000010" stroke-width="0.15">Vert:</text>
<rect x="1095.1" y="430.3" width="78.5" height="13.1" fill="#ffffff"/><path d="M1095.8999999999999,443.40000000000003 L1095.8999999999999,431.1 L1173.6,431.1" stroke="#6a6a6a" stroke-width="1.6" fill="none"/><path d="M1096.1,442.90000000000003 L1173.1,442.90000000000003 L1173.1,431.3" stroke="#fafafa" stroke-width="1" fill="none"/>
<rect x="1203.3" y="430.3" width="77.7" height="13.3" fill="#ffffff"/><path d="M1204.1,443.6 L1204.1,431.1 L1281.0,431.1" stroke="#6a6a6a" stroke-width="1.6" fill="none"/><path d="M1204.3,443.1 L1280.5,443.1 L1280.5,431.3" stroke="#fafafa" stroke-width="1" fill="none"/>
<text x="1108.3" y="440.7" font-size="9.8" font-family="Liberation Sans, sans-serif" fill="#000010" text-anchor="start" textLength="53.01" lengthAdjust="spacingAndGlyphs" stroke="#000010" stroke-width="0.15">25.183697°C</text>
<text x="1218.0" y="440.7" font-size="9.8" font-family="Liberation Sans, sans-serif" fill="#000010" text-anchor="start" textLength="49.5" lengthAdjust="spacingAndGlyphs" stroke="#000010" stroke-width="0.15">2.5004472V</text>
<rect x="1095.1" y="470.9" width="78.1" height="12.6" fill="#efefef"/><path d="M1095.8999999999999,483.5 L1095.8999999999999,471.7 L1173.1999999999998,471.7" stroke="#6a6a6a" stroke-width="1.6" fill="none"/><path d="M1096.1,483.0 L1172.6999999999998,483.0 L1172.6999999999998,471.9" stroke="#fafafa" stroke-width="1" fill="none"/>
<rect x="1203.2" y="471" width="77.6" height="12.6" fill="#efefef"/><path d="M1204.0,483.6 L1204.0,471.8 L1280.8,471.8" stroke="#6a6a6a" stroke-width="1.6" fill="none"/><path d="M1204.2,483.1 L1280.3,483.1 L1280.3,472" stroke="#fafafa" stroke-width="1" fill="none"/>
<rect x="1095.1" y="499.1" width="78.1" height="12.6" fill="#efefef"/><path d="M1095.8999999999999,511.70000000000005 L1095.8999999999999,499.90000000000003 L1173.1999999999998,499.90000000000003" stroke="#6a6a6a" stroke-width="1.6" fill="none"/><path d="M1096.1,511.20000000000005 L1172.6999999999998,511.20000000000005 L1172.6999999999998,500.1" stroke="#fafafa" stroke-width="1" fill="none"/>
<rect x="1203.2" y="498.9" width="77.6" height="12.6" fill="#efefef"/><path d="M1204.0,511.5 L1204.0,499.7 L1280.8,499.7" stroke="#6a6a6a" stroke-width="1.6" fill="none"/><path d="M1204.2,511.0 L1280.3,511.0 L1280.3,499.9" stroke="#fafafa" stroke-width="1" fill="none"/>
<rect x="1203.2" y="514.6" width="77.6" height="12.6" fill="#efefef"/><path d="M1204.0,527.2 L1204.0,515.4 L1280.8,515.4" stroke="#6a6a6a" stroke-width="1.6" fill="none"/><path d="M1204.2,526.7 L1280.3,526.7 L1280.3,515.6" stroke="#fafafa" stroke-width="1" fill="none"/>
<text x="1074.2" y="480.5" font-size="9.2" font-family="Liberation Sans, sans-serif" fill="#a0a0a0" text-anchor="start" textLength="19.64" lengthAdjust="spacingAndGlyphs">Horz:</text>
<text x="1185.1" y="480.6" font-size="9.2" font-family="Liberation Sans, sans-serif" fill="#a0a0a0" text-anchor="start" textLength="16.04" lengthAdjust="spacingAndGlyphs">Vert:</text>
<text x="1074.2" y="508.5" font-size="9.2" font-family="Liberation Sans, sans-serif" fill="#a0a0a0" text-anchor="start" textLength="19.64" lengthAdjust="spacingAndGlyphs">Horz:</text>
<text x="1185.1" y="508.6" font-size="9.2" font-family="Liberation Sans, sans-serif" fill="#a0a0a0" text-anchor="start" textLength="16.04" lengthAdjust="spacingAndGlyphs">Vert:</text>
<text x="1178.8" y="524.3" font-size="9.2" font-family="Liberation Sans, sans-serif" fill="#a0a0a0" text-anchor="start" textLength="22.05" lengthAdjust="spacingAndGlyphs">Slope:</text>
<text x="1119.7" y="480.7" font-size="9.2" font-family="Liberation Sans, sans-serif" fill="#a0a0a0" text-anchor="start" textLength="29.52" lengthAdjust="spacingAndGlyphs">-- N/A--</text>
<text x="1227.7" y="480.7" font-size="9.2" font-family="Liberation Sans, sans-serif" fill="#a0a0a0" text-anchor="start" textLength="29.52" lengthAdjust="spacingAndGlyphs">-- N/A--</text>
<text x="1119.7" y="508.7" font-size="9.2" font-family="Liberation Sans, sans-serif" fill="#a0a0a0" text-anchor="start" textLength="29.52" lengthAdjust="spacingAndGlyphs">-- N/A--</text>
<text x="1227.7" y="508.7" font-size="9.2" font-family="Liberation Sans, sans-serif" fill="#a0a0a0" text-anchor="start" textLength="29.52" lengthAdjust="spacingAndGlyphs">-- N/A--</text>
<text x="1227.7" y="524.5" font-size="9.2" font-family="Liberation Sans, sans-serif" fill="#a0a0a0" text-anchor="start" textLength="29.52" lengthAdjust="spacingAndGlyphs">-- N/A--</text>
</svg>
</body></html>
